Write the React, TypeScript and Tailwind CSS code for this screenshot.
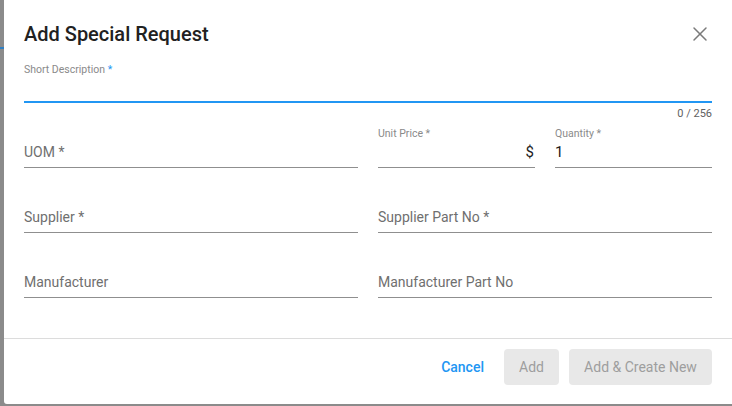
import React from 'react'
import { X } from 'lucide-react'

type FieldProps = {
  label?: string
  placeholder?: string
  value?: string
  suffix?: string
  className?: string
}

const Field: React.FC<FieldProps> = ({ label, placeholder, value, suffix, className = '' }) => (
  <div className={`flex flex-col ${className}`}>
    <div className="h-[16px] pt-[1px] text-[10.5px] leading-[16px] text-[#8a8a8a]">{label}</div>
    <div className="h-[27px] flex items-center pb-[4px] border-b border-[#8f8f8f] text-[14px] leading-[20px]">
      {value ? (
        <span className="text-[#212121] text-[15px]">{value}</span>
      ) : (
        <span className="text-[#6f6f6f] flex-1">{placeholder}</span>
      )}
      {suffix && <span className="ml-auto text-[#212121] text-[15px] pr-[1px]">{suffix}</span>}
    </div>
  </div>
)

export default function App() {
  return (
    <div className="w-[732px] h-[406px] bg-[#8b8b8b] overflow-hidden flex font-['Roboto',sans-serif]">
      {/* backdrop sliver */}
      <div className="w-[4px] shrink-0 flex flex-col">
        <div className="h-[47px]" />
        <div className="h-[2px] bg-[#2f7fc4]" />
      </div>

      {/* Dialog */}
      <div className="w-[728px] h-[404px] bg-white rounded-bl-[3px] flex flex-col">
        {/* Header */}
        <div className="flex items-center justify-between pl-[20px] pr-[20px] pt-[18px]">
          <h2 className="text-[20px] leading-[32px] font-medium text-[#212121] m-0">Add Special Request</h2>
          <X className="w-[24px] h-[24px] text-[#7a7a7a]" strokeWidth={1.5} />
        </div>

        {/* Body */}
        <div className="px-[20px] flex flex-col">
          <div className="mt-[12px] h-[16px] text-[10.5px] leading-[16px] text-[#8a8a8a]">
            Short Description <span className="text-[#2196f3]">*</span>
          </div>
          <div className="h-[25px] border-b-2 border-[#2196f3]" />
          <div className="mt-[4px] h-[14px] text-right text-[11px] leading-[14px] text-[#616161]">0 / 256</div>

          <div className="mt-[4px] grid grid-cols-2 gap-x-[20px] gap-y-[22px]">
            <Field placeholder="UOM *" />
            <div className="grid grid-cols-2 gap-x-[20px]">
              <Field label="Unit Price *" suffix="$" />
              <Field label="Quantity *" value="1" />
            </div>
            <Field placeholder="Supplier *" />
            <Field placeholder="Supplier Part No *" />
            <Field placeholder="Manufacturer" />
            <Field placeholder="Manufacturer Part No" />
          </div>
        </div>

        <div className="flex-1" />

        {/* Footer */}
        <div className="border-t border-[#dcdcdc] flex justify-end items-center gap-[10px] pt-[10px] pb-[19px] px-[20px]">
          <button className="h-[36px] px-[16px] mr-[-6px] text-[14px] font-medium text-[#2196f3]">Cancel</button>
          <button className="h-[36px] w-[55px] rounded-[4px] bg-[#e8e8e8] text-[14px] text-[#9e9e9e]">Add</button>
          <button className="h-[36px] w-[143px] rounded-[4px] bg-[#e8e8e8] text-[14px] text-[#9e9e9e]">Add &amp; Create New</button>
        </div>
      </div>
    </div>
  )
}
